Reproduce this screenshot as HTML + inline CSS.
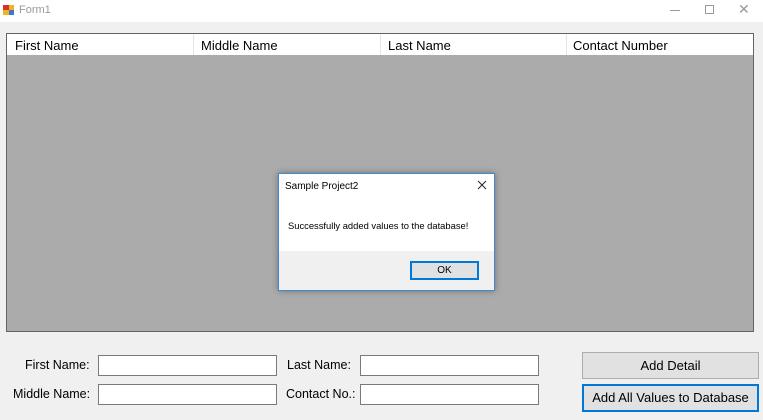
<!DOCTYPE html>
<html><head><style>
*{margin:0;padding:0;box-sizing:border-box}
body{width:763px;height:420px;background:#f0f0f0;font-family:"Liberation Sans",sans-serif;position:relative;overflow:hidden}
.a{position:absolute}
.tb{background:#fff;border:1px solid #7a7a7a;height:21px;width:179px}
.lbl{font-size:12.5px;color:#000}
.btn{background:#e1e1e1;border:1px solid #adadad;font-size:13px;text-align:center}
</style></head><body>
<div class="a" style="left:0;top:0;width:763px;height:22px;background:#fff"></div>
<div class="a" style="left:3px;top:5px;width:6px;height:5px;background:#d9302a"></div>
<div class="a" style="left:9px;top:5px;width:5px;height:5px;background:#f2b31c"></div>
<div class="a" style="left:3px;top:10px;width:6px;height:5px;background:#f2b31c"></div>
<div class="a" style="left:9px;top:10px;width:5px;height:5px;background:#3a78c8"></div>
<div class="a" style="left:19px;top:4px;font-size:11px;color:#999">Form1</div>
<div class="a" style="left:670px;top:10px;width:10px;height:1px;background:#999"></div>
<div class="a" style="left:705px;top:5px;width:9px;height:9px;border:1px solid #999"></div>
<div class="a" style="left:738px;top:1px;font-size:14px;color:#999">✕</div>

<div class="a" style="left:6px;top:33px;width:748px;height:299px;border:1px solid #646464;background:#ababab"></div>
<div class="a" style="left:7px;top:34px;width:746px;height:21px;background:#fff;font-size:13px">
<span class="a" style="left:8px;top:4px">First Name</span>
<span class="a" style="left:186px;top:0;width:1px;height:21px;background:#e5e5e5"></span>
<span class="a" style="left:194px;top:4px">Middle Name</span>
<span class="a" style="left:373px;top:0;width:1px;height:21px;background:#e5e5e5"></span>
<span class="a" style="left:381px;top:4px">Last Name</span>
<span class="a" style="left:559px;top:0;width:1px;height:21px;background:#e5e5e5"></span>
<span class="a" style="left:566px;top:4px">Contact Number</span>
</div>

<div class="a" style="left:278px;top:173px;width:217px;height:118px;border:1px solid #3c8ad0;background:#fff;box-shadow:0 0 6px rgba(0,0,0,.35)">
<div class="a" style="left:0;top:77px;width:215px;height:39px;background:#f0f0f0"></div>
<div class="a" style="left:6px;top:7px;font-size:10px">Sample Project2</div>
<svg class="a" style="left:198px;top:6px" width="10" height="10"><path d="M1 1L9 9M9 1L1 9" stroke="#222" stroke-width="1"/></svg>
<div class="a" style="left:9px;top:46px;font-size:9.4px">Successfully added values to the database!</div>
<div class="a btn" style="left:131px;top:87px;width:69px;height:19px;border:2px solid #0078d7;font-size:10px;line-height:15px">OK</div>
</div>

<div class="a lbl" style="left:25px;top:358px">First Name:</div>
<div class="a lbl" style="left:13px;top:387px">Middle Name:</div>
<div class="a tb" style="left:98px;top:355px"></div>
<div class="a tb" style="left:98px;top:384px"></div>
<div class="a lbl" style="left:287px;top:358px">Last Name:</div>
<div class="a lbl" style="left:286px;top:387px">Contact No.:</div>
<div class="a tb" style="left:360px;top:355px"></div>
<div class="a tb" style="left:360px;top:384px"></div>
<div class="a btn" style="left:582px;top:352px;width:177px;height:27px;line-height:25px">Add Detail</div>
<div class="a btn" style="left:582px;top:384px;width:177px;height:28px;line-height:24px;border:2px solid #0078d7">Add All Values to Database</div>
</body></html>
